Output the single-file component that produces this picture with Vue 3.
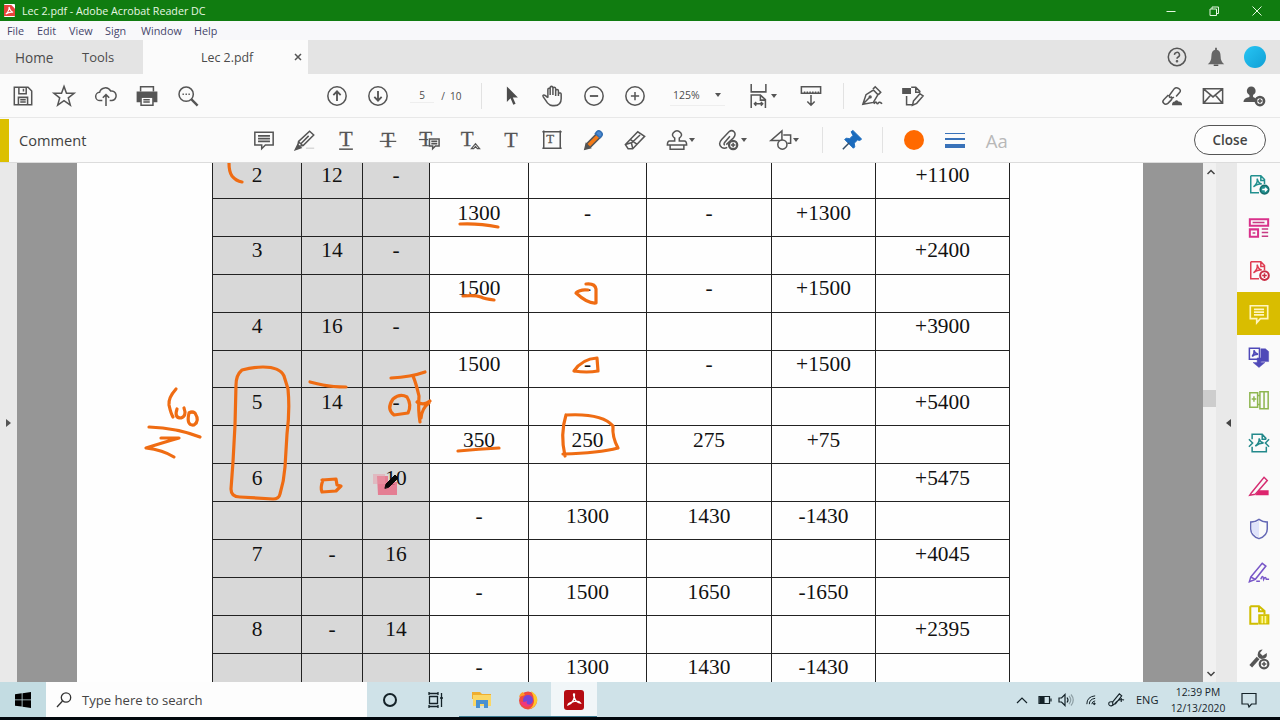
<template>
  <div class="screen">
    <header class="titlebar">
      <svg class="app-logo" viewBox="0 0 12 14">
        <rect width="12" height="14" rx="1" fill="#fff" />
        <path d="M0 1h8l4 4v8H0z" fill="#e9443c" />
        <path d="M2 11Q6 7 5.500 3Q7 8 10 9Q6 8 2 11z" fill="none" stroke="#fff" stroke-width="1.200" />
      </svg>
      <span class="title">Lec 2.pdf - Adobe Acrobat Reader DC</span>
      <div class="window-buttons">
        <svg viewBox="0 0 12 12"><path d="M1.500 6.500h9" /></svg>
        <svg viewBox="0 0 12 12"><path d="M2 4h6.500v6.500H2zM4 4V2h6.500v6.500h-2" /></svg>
        <svg viewBox="0 0 12 12"><path d="M1.500 1.500l9 9M10.500 1.500l-9 9" /></svg>
      </div>
    </header>

    <nav class="menubar">
      <span v-for="item in menu" :key="item" :class="'menu-' + item.toLowerCase()">{{ item }}</span>
    </nav>

    <div class="tabbar">
      <span class="tab home">Home</span>
      <span class="tab tools">Tools</span>
      <div class="tab active">
        <span class="tab-name">Lec 2.pdf</span>
        <svg class="tab-close" viewBox="0 0 8 8"><path d="M1 1l6 6M7 1L1 7" /></svg>
      </div>
      <div class="account">
        <svg class="icon" viewBox="0 0 24 24">
          <circle cx="12" cy="12" r="9.500" />
          <path d="M9.300 9.700a2.700 2.700 0 1 1 4 2.300q-1.300.8-1.300 2" />
          <circle cx="12" cy="16.600" r=".6" />
        </svg>
        <svg class="icon" viewBox="0 0 24 24" v-html="icons.bell"></svg>
        <span class="avatar"></span>
      </div>
    </div>

    <div class="toolbar">
      <div class="group files">
        <svg v-for="name in fileTools" :key="name" class="icon" viewBox="0 0 24 24" v-html="icons[name]"></svg>
      </div>
      <div class="group pages">
        <svg class="icon" viewBox="0 0 24 24" v-html="icons.up"></svg>
        <svg class="icon" viewBox="0 0 24 24" v-html="icons.down"></svg>
      </div>
      <span class="page-now">5</span>
      <span class="page-total">/&nbsp; 10</span>
      <i class="divider"></i>
      <div class="group view-tools">
        <svg v-for="name in viewTools" :key="name" class="icon" viewBox="0 0 24 24" v-html="icons[name]"></svg>
      </div>
      <div class="zoom-box"><span>125%</span><i class="caret"></i></div>
      <div class="fit">
        <svg class="icon" viewBox="0 0 24 24" v-html="icons.fit"></svg>
        <i class="caret"></i>
      </div>
      <svg class="icon scroll" viewBox="0 0 24 24" v-html="icons.scroll"></svg>
      <i class="divider second"></i>
      <div class="group signing">
        <svg class="icon" viewBox="0 0 24 24" v-html="icons.pen"></svg>
        <svg class="icon" viewBox="0 0 24 24" v-html="icons.edit"></svg>
      </div>
      <div class="group share">
        <svg class="icon" viewBox="0 0 24 24" v-html="icons.link"></svg>
        <svg class="icon" viewBox="0 0 24 24" v-html="icons.mail"></svg>
        <svg class="icon" viewBox="0 0 24 24" v-html="icons.person"></svg>
      </div>
    </div>

    <div class="commentbar">
      <i class="accent"></i>
      <span class="heading">Comment</span>
      <div class="group marks">
        <svg v-for="name in markTools" :key="name" class="icon" viewBox="0 0 24 24" v-html="icons[name]"></svg>
      </div>
      <div class="group dropdowns">
        <div v-for="name in dropTools" :key="name" class="drop">
          <svg class="icon" viewBox="0 0 24 24" v-html="icons[name]"></svg>
          <i class="caret"></i>
        </div>
      </div>
      <i class="divider"></i>
      <svg class="icon pin" viewBox="0 0 24 24" v-html="icons.pin"></svg>
      <i class="divider"></i>
      <span class="swatch"></span>
      <div class="weights"><i></i><i></i><i></i></div>
      <span class="font-button">Aa</span>
      <button class="close-button">Close</button>
    </div>

    <main class="viewer">
      <div class="rail left"><i class="arrow right-arrow"></i></div>
      <div class="canvas">
        <div class="page">
          <div class="table">
            <template v-for="(row, r) in rows" :key="r">
              <div v-for="(cell, c) in row" :key="c" class="cell" :class="{ shaded: c < 3 }">{{ cell }}</div>
            </template>
          </div>
        </div>
      </div>
      <div class="scrollbar">
        <svg viewBox="0 0 10 6"><path d="M1.500 5L5 1.500L8.500 5" /></svg>
        <i class="thumb"></i>
        <svg viewBox="0 0 10 6"><path d="M1.500 1L5 4.500L8.500 1" /></svg>
      </div>
      <div class="rail right"><i class="arrow left-arrow"></i></div>
      <aside class="sidebar">
        <div v-for="name in sideTools" :key="name" class="side-item" :class="{ selected: name === 'sideComment' }">
          <svg class="icon" viewBox="0 0 24 24" v-html="icons[name]"></svg>
        </div>
      </aside>

      <!-- pencil marks drawn over the page -->
      <svg class="ink" viewBox="0 163 1280 519">
        <path v-for="d in strokes" :key="d" :d="d" />
        <g class="cursor">
          <path d="M377 476h11v6h9v13h-19z" fill="#e8607c" stroke="none" opacity=".75" />
          <path d="M373 474h12v10h-12z" fill="#e89aa8" stroke="none" opacity=".5" />
          <path d="M385 488l1-4l9-9l3 3l-9 9z" fill="#080808" stroke="#080808" stroke-width="1" />
        </g>
      </svg>
    </main>

    <footer class="taskbar">
      <div class="start">
        <svg viewBox="0 0 16 16"><path d="M0 2.300l6.700-1v6.200H0zM7.500 1.200L16 0v7.500H7.500zM0 8.300h6.700v6.300L0 13.700zM7.500 8.300H16V16l-8.500-1.200z" /></svg>
      </div>
      <div class="search">
        <svg viewBox="0 0 16 16"><circle cx="10" cy="5.500" r="4.700" /><path d="M6.500 9L1 15" /></svg>
        <span>Type here to search</span>
      </div>
      <div class="apps">
        <div class="app"><svg viewBox="0 0 20 20"><circle cx="10" cy="10" r="6" fill="none" stroke="#142228" stroke-width="2" /></svg></div>
        <div class="app"><svg viewBox="0 0 20 20" fill="none" stroke="#142228" stroke-width="1.300"><path d="M3 3.500h9M3 16.500h9M3.500 6.500h8v7h-8zM15.500 3v14M14 8h3M3 2v3M12 2v3M3 15v3M12 15v3" /></svg></div>
        <div class="app open">
          <svg viewBox="0 0 20 20"><path d="M0 2h8l2 2h9v5H0z" fill="#efae2f" /><path d="M1 5h18v11H1z" fill="#fbd765" /><path d="M4 10h12v8h-4v-4H8v4H4z" fill="#4a91d0" /></svg>
        </div>
        <div class="app open">
          <svg viewBox="0 0 20 20"><circle cx="10" cy="10.500" r="9" fill="#f04a3e" /><path d="M13 1q8 5 6 11q-2 6-8 7q5-3 5-8q0-5-3-10z" fill="#ffc629" /><path d="M1 7q1-4 4-5l2 3z" fill="#ff9a25" /><circle cx="10" cy="10" r="5" fill="#7545d6" /><path d="M2 11q3 2 7 0q-2 4 5 4q-4 3-8 1q-3-1-4-5z" fill="#f1367a" /></svg>
        </div>
        <div class="app open current">
          <svg viewBox="0 0 20 20"><rect width="20" height="20" rx="3" fill="#b50c12" /><path d="M4 15q7-3 6.500-11q-2-1 0 4q2 5 6 5q-2-3-8-1q-4 1-4.500 3z" fill="none" stroke="#fff" stroke-width="1.300" /></svg>
        </div>
      </div>
      <div class="tray">
        <svg class="chevron" viewBox="0 0 12 8"><path d="M1 7l5-5l5 5" /></svg>
        <svg class="battery" viewBox="0 0 14 10"><path d="M1 1.500h10.500v7H1zM13 3.500v3" /><path d="M2 2h4v6H2z" fill="#142228" /></svg>
        <svg class="volume" viewBox="0 0 16 14"><path d="M1 5h2.500L7 1.500v11L3.500 9H1z" /><path d="M9 4.500q2 2.500 0 5" /><path d="M11 3q3.500 4 0 8M13 1.500q4.500 5.500 0 11" opacity=".35" /></svg>
        <svg class="wifi" viewBox="0 0 12 12"><path d="M1 11Q1 2 11 1M4 11Q4 5 11 4M7 11q0-3 4-4" /><circle cx="10" cy="10.500" r="1" fill="#142228" /></svg>
        <svg class="ink-pen" viewBox="0 0 18 16"><path d="M5 10L12 1.500l2.500 2L8 12l-3 1zM5 10Q0 9 1 13q2 3 6-1q5-6 10-4M14 6v4" /></svg>
        <span class="lang">ENG</span>
        <div class="clock"><span>12:39 PM</span><span>12/13/2020</span></div>
        <svg class="notice" viewBox="0 0 16 16"><path d="M1 1.500h14v10.500h-4.500L8 15l-1-3H1z" /></svg>
      </div>
    </footer>
    <div class="bottom-edge"></div>
  </div>
</template>

<script setup>
const menu = ['File', 'Edit', 'View', 'Sign', 'Window', 'Help'];

const fileTools = ['save', 'star', 'cloud', 'print', 'find'];
const viewTools = ['arrow', 'hand', 'minus', 'plus'];
const markTools = ['note', 'highlight', 'underline', 'strike', 'replace', 'insert', 'text', 'textBox', 'pencil', 'eraser'];
const dropTools = ['stamp', 'clip', 'shapes'];
const sideTools = [
  'exportPdf', 'organize', 'createPdf', 'sideComment', 'combine', 'compare',
  'compress', 'redact', 'shield', 'sign', 'sendFile', 'wrench',
];

const serifT = (x, y, size) =>
  `<text x="${x}" y="${y}" font-family="Liberation Serif, serif" font-size="${size}" text-anchor="middle" fill="#555" stroke="#555" stroke-width=".3">T</text>`;

const icons = {
  save: '<path d="M2.500 2.500h15l4 4v15h-19zM7.500 3v6.500h8V3M12.500 4v3M7 21v-7.500h10V21M9 16h6M9 18.500h6"/>',
  star: '<path d="M12 1.500l2.700 7.500H23l-6.300 5L18.900 22L12 17L5.100 22l2.200-8L1 9h8.300z"/>',
  cloud: '<path d="M8 17H5.500a4.500 4.500 0 0 1-.5-9A6.500 6.500 0 0 1 17 6.500a5.200 5.200 0 0 1 1.500 10.500h-2.500M12 23V10.500M8.500 14l3.500-3.500l3.500 3.500"/>',
  print: '<path d="M5 7V2h14v5"/><path d="M1.500 8h21v10h-3v-5H4.500v5h-3z" fill="#555"/><path d="M5.500 13h13v9h-13zM8 16h7M8 18.500h7"/>',
  find: '<circle cx="10" cy="10" r="7.800"/><path d="M15.500 15.500l7 7" stroke-width="2.600"/><path d="M6 10h1.500M9.300 10h1.500M12.500 10h1.500"/>',
  up: '<circle cx="12" cy="12" r="10"/><path d="M12 17.500V7M8 11l4-4l4 4" stroke-width="2"/>',
  down: '<circle cx="12" cy="12" r="10"/><path d="M12 6.500V17M8 13l4 4l4-4" stroke-width="2"/>',
  arrow: '<path d="M7.500 1.500v17l4-4l3 7l2.500-1l-3-7h5.500z" fill="#4c4c4c" stroke="none"/>',
  hand: '<path d="M7.500 14V5q0-1.500 1.300-1.500T10 5v6V3q0-1.500 1.400-1.500T13 3v8V4q0-1.500 1.400-1.500T16 4v8V6.500Q16 5 17.500 5T19 6.500V12M19 9q3-1 3 1v5q0 7.500-7.500 7.500h-2q-3 0-5.500-3L2.500 13q-1-2 .5-2.200T7.500 14"/>',
  minus: '<circle cx="12" cy="12" r="10"/><path d="M7.500 12h9" stroke-width="2"/>',
  plus: '<circle cx="12" cy="12" r="10"/><path d="M7.500 12h9M12 7.500v9"/>',
  fit: '<path d="M3.500-1v8.500h16V-1M3.500 25V11h10l5.500 5v9M13.500 11v5.500h5M7 20.500h9M9 18.500l-2 2l2 2M14 18.500l2 2l-2 2"/>',
  scroll: '<path d="M1.500 2h21v7h-21zM5 9V7M8 9V7M11 9V7M14 9V7M17 9V7M20 9V7M12 11v11M8 18l4 4l4-4"/>',
  pen: '<path d="M2 21L5.500 10.500l8-5l5 5l-5 8.500zM2 21l7-7M13 4.500L15.500 2l6 6L19 10.500M14 20.500q2-3 3-1t2 0t4 1"/><circle cx="10" cy="13" r="1"/>',
  edit: '<path d="M10 2.500h5l5 5M15 3v5h5M5 12v9.500h6M12.500 17.500l7-8l3.500 2.500l-7 8l-4.500 2z"/><path d="M1 4h8v5H1z" fill="#555"/>',
  link: '<path d="M8 11l-5 5q-2 2 0 4t4.500 0l3.500-3.500q2-2 0-4M10 14q-2-2 0-4l4.500-6q2-2 5 0t.5 4.500l-3.500 4M10 13q2 2 4 0"/><path d="M12 22q0-4 3-4q2-3 4 0q4 0 4 4z" fill="#555" stroke="none"/>',
  mail: '<path d="M1.500 4h21v16h-21zM2 4.500L12 13l10-8.500M2 19.500l7.500-8.500M22 19.500l-7.500-8.500"/>',
  person: '<circle cx="9" cy="6.500" r="4.800" fill="#555" stroke="none"/><path d="M.5 18.500q0-4.500 6.500-5.500v-3h4v3q4 1 4 5.500z" fill="#555" stroke="none"/><circle cx="18.500" cy="17.500" r="4.500" fill="#fafafa" stroke-width="2.800"/><path d="M16 17.500h5M18.500 15v5"/>',
  bell: '<path d="M3 20q4-3 4-9q0-6 4-7V2h2v2q4 1 4 7q0 6 4 9z" fill="#666" stroke="none"/><path d="M9.500 21h5"/>',
  note: '<path d="M2 3.500h20v14h-8.500L9.500 21.500v-4H2zM5.500 7.500h13M5.500 10.500h13M5.500 13.500h13"/>',
  highlight: '<path d="M4 19l1-5.500L17 2.500l4.500 4L10 18zM5 14l4.500 4M8 15.500l8-8"/><path d="M1.500 22.500l2.500-5l3.500 3z" fill="#555"/><path d="M13 21h9" opacity=".2"/>',
  underline: serifT(12, 18, 24) + '<path d="M4.500 22h15"/>',
  strike: serifT(12, 20, 23) + '<path d="M3 13.500h18" stroke-width="1.300"/>',
  replace: serifT(8.5, 18.5, 23) + '<path d="M1 11.500h10" stroke-width="1.300"/><path d="M12.500 11h10.500v7.500h-4l-3 3v-3h-3.500zM14.500 13.500h6.500M14.500 16h6.500" fill="#fafafa"/>',
  insert: serifT(9, 18.5, 23) + '<path d="M13.500 21.500l4.500-5.500l4.500 5.500H20l-2-2.500l-2 2.500z" stroke-width="1.300"/>',
  text: serifT(12, 19.5, 24),
  textBox: '<path d="M3 3h18v18H3zM1.500 3h3M19.500 3h3M3 1.500v3M21 1.500v3M1.500 21h3M19.500 21h3"/>' + serifT(10, 15.5, 14),
  pencil: '<path d="M4 16L15.500 4.500l4 4L8 20l-5 1z" fill="#f47a17"/><path d="M15 3q2-2 4.500 0t1 4.500l-2 2l-5-4.500z" fill="#4a88d0" stroke="#326eb2"/><path d="M2 22l1.500-6l4.500 4.500z" fill="#555"/>',
  eraser: '<path d="M1.500 17L15 3l7.500 5L9.500 21.500H4.500zM7 11.500l7 5M1.500 17l6.500-2l1.500 6M8.500 15l9-8.500"/>',
  stamp: '<path d="M9.500 13V10Q5.500 7 8 4q4-4 8 0q2.500 3-1.500 6v3h5.500q2.500 0 2.500 4.500h-21Q1.500 13 4 13zM4.500 17.500v4.500h15v-4.500"/>',
  clip: '<path d="M13 8l-6 7q-1 2 .5 2.500M4 20q-4.500-3.500 0-8.500l8-8.500q3-2.500 5.500 0t-.5 6.500L9 17M4 20q3 2 6 0"/><circle cx="16.500" cy="17.500" r="4.500" fill="#fafafa" stroke-width="2.400"/><path d="M16.500 15v5M14 17.500h5"/>',
  shapes: '<path d="M13 2v10.500H1zM14.500 6.500h8v9h-3.500"/><circle cx="13.500" cy="17" r="5" fill="#fafafa"/>',
  pin: '<path d="M13 1.500l9.500 9.500l-2 1.500l-2.500-.5l-3.500 3.500l.5 4l-1.500 1.500L4 11.500L5.500 10l4 .5l3.500-3.500l-2-4z" fill="#1b6bbd" stroke="#1b6bbd" stroke-width="1"/><path d="M9 15l-7 7" stroke="#344e68"/>',
  exportPdf: '<path d="M3 2h11l4 4v5M12 20.500H3V2M14 2v5h4M6 14q5-4 4-9q1 5 5 6q-5-1-9 3" stroke="#22908f"/><circle cx="18" cy="17" r="4.700" fill="#22908f" stroke="#176c6c"/><path d="M15.500 17h5M18.500 15l2 2l-2 2" stroke="#fff"/>',
  organize: '<path d="M2 2.500h20v7H2zM2 13.500h9v8H2z" stroke="#d9318b" stroke-width="2.200"/><path d="M5 6h13M5 17.500h3M15 13h7M15 17h7M15 21h7" stroke="#c63b84"/>',
  createPdf: '<path d="M3 2h11l4 4v5M12 20.500H3V2M14 2v5h4M6 14q5-4 4-9q1 5 5 6q-5-1-9 3" stroke="#df3d52"/><circle cx="18" cy="17" r="4.700" fill="#fff" stroke="#c92e45" stroke-width="2.200"/><path d="M15.500 17h5M18 14.500v5" stroke="#c92e45"/>',
  sideComment: '<path d="M2.500 3h19v14h-8l-4 4.500V17h-7zM6.500 7h11M6.500 10h11M6.500 13h11" stroke="#fff5c0" stroke-width="1.800"/>',
  combine: '<path d="M1.500 2.500h11v12h-11zM4.500 11.500q3-3 2-7q1 4 4.500 4.500q-4.500 0-6.500 2.500" stroke="#4f49b8"/><path d="M14 3h5l3.500 3v11H14zM10 13h4v5h4.500L12 23.500L5.500 18h4.500z" fill="#4f49b8" stroke="#4f49b8" stroke-width=".5"/>',
  compare: '<path d="M2 4h8.500v16H2zM13 3h9v18.500h-9zM17.500 3v18M10.500 7H13M10.500 17H13M4 11h5M6.500 8v6" stroke="#8eb650"/>',
  compress: '<path d="M4.500 8V2.500h11l4.500 5M4.500 16v5.500H20V16M15.500 3v5h4.500M8 15.500q5-4 4-8.500q1 4 5 5q-5 0-9 3.500M1 8l4 4l-4 4M23 8l-4 4l4 4" stroke="#23898b"/>',
  redact: '<path d="M4 19L17.500 2.500L21 6L8 21M4 19l-2 3l6-1" stroke="#d62d72"/><path d="M12 16.500h10.500v5.500H8z" fill="#dd256e" stroke="none"/>',
  shield: '<path d="M12 1.500q4 3 9 3v7.500q0 7.500-9 10.500q-9-3-9-10.500V4.500q5 0 9-3z" stroke="#6468b5"/><path d="M12 3v18q-8-3-8-9V6q5-.5 8-3z" fill="#dfe3fa" stroke="none"/>',
  sign: '<path d="M3 17.500L15.500 2.500l4 3L8 20l-6.500 2.500zM3 17.500l5 2.500M14 20q2-6 3 0q2-4 3 0h3M9 22h4" stroke="#7856c8"/>',
  sendFile: '<path d="M2.500 2.500h9.500l6 5v4M2.500 2.500v19H11M12 3v5h6" stroke="#d0bd00" stroke-width="2.200"/><path d="M12 12h10.500v9.500H12z" fill="#dfcf13" stroke="#d0bd00"/><path d="M15.500 13v8M19 13v8" stroke="#fff8a0"/>',
  wrench: '<path d="M3 20l8-9" stroke-width="4"/><path d="M16 1.500l-3 4l3 3l4.500-3q1 6.500-5.500 6.500q-6-1-4-7q1-3.500 5-3.500z" fill="#555" stroke="none"/><circle cx="17.500" cy="17.500" r="4.700" fill="#fafafa" stroke-width="2.400"/><path d="M15 17.500h5M17.500 15v5"/>',
};

const rows = [
  ['2', '12', '-', '', '', '', '', '+1100'],
  ['', '', '', '1300', '-', '-', '+1300', ''],
  ['3', '14', '-', '', '', '', '', '+2400'],
  ['', '', '', '1500', '-', '-', '+1500', ''],
  ['4', '16', '-', '', '', '', '', '+3900'],
  ['', '', '', '1500', '-', '-', '+1500', ''],
  ['5', '14', '-', '', '', '', '', '+5400'],
  ['', '', '', '350', '250', '275', '+75', ''],
  ['6', '', '10', '', '', '', '', '+5475'],
  ['', '', '', '-', '1300', '1430', '-1430', ''],
  ['7', '-', '16', '', '', '', '', '+4045'],
  ['', '', '', '-', '1500', '1650', '-1650', ''],
  ['8', '-', '14', '', '', '', '', '+2395'],
  ['', '', '', '-', '1300', '1430', '-1430', ''],
];

const strokes = [
  'M229 163Q229 172 232 176Q236 181 242 182',
  'M460 224Q478 223 498 227',
  'M463 296Q475 295 481 297Q485 299 494 300',
  'M586 284Q595 283 596 289L596 303Q588 304 576 293Q580 289 588 290',
  'M574 371Q582 359 597 358L598 371Q587 373 574 371',
  'M458 451Q479 449 499 448',
  'M566 415Q602 413 613 426Q612 437 618 448Q599 453 563 454M566 415Q560 434 565 456',
  'M236 385Q236 375 242 370Q253 367 263 367Q280 367 284 376L288 389Q290 410 287 434L285 467Q284 481 280 494Q279 499 273 499L240 497Q231 497 231 489L233 462L235 425Z',
  'M310 382Q318 384 323 385Q333 387 346 387',
  'M391 378Q411 377 425 372M413 376Q416 383 419 396Q418 410 420 422M417 402Q424 406 430 401M429 403Q422 408 421 418',
  'M393 399Q400 393 407 397Q412 405 408 413L394 415Q386 409 393 399Z',
  'M322 480L336 479L337 485L341 486L336 491L322 492Q320 488 323 480',
  'M176 389Q168 398 169 405Q171 414 173 417M177 409Q174 418 181 418Q187 416 184 408M189 413Q186 426 194 425Q200 421 195 413Q192 411 189 413',
  'M149 427Q177 428 200 437M161 438H179Q165 442 146 448Q163 450 174 457',
];
</script>

<style>
body {
  background: #000;
}
</style>

<style scoped>
* {
  box-sizing: border-box;
}

.screen {
  width: 1280px;
  height: 720px;
  display: flex;
  flex-direction: column;
  overflow: hidden;
  background: #fbfbfb;
  color: #4b4b4b;
  font-family: "Open Sans", "Noto Sans", sans-serif;
}

.icon {
  width: 22px;
  height: 22px;
  flex: none;
  overflow: visible;
  fill: none;
  stroke: #555;
  stroke-width: 1.65;
}

.group {
  display: flex;
  flex: none;
  align-items: center;
}

.caret {
  border: 3px solid transparent;
  border-top: 4px solid #555;
  border-bottom: 0;
}

.divider {
  width: 1px;
  height: 26px;
  background: #e2e2e2;
}

.titlebar {
  height: 21px;
  flex: none;
  display: flex;
  align-items: center;
  background: #107c10;
  color: #e6f7e2;
  font-size: 10.7px;
}

.app-logo {
  width: 11px;
  height: 13px;
  margin-left: 4px;
  margin-right: 7px;
}

.window-buttons {
  margin-left: auto;
  display: flex;
  gap: 31px;
  padding-right: 17px;
}

.window-buttons svg {
  width: 12px;
  height: 12px;
  fill: none;
  stroke: #e6f7e2;
}

.menubar {
  height: 19px;
  flex: none;
  display: flex;
  align-items: center;
  background: #f8f8fa;
  color: #45456a;
  font-size: 10.8px;
  padding-left: 7px;
}

.menubar span {
  width: 36px;
  white-space: nowrap;
}

.menubar .menu-file { width: 30px; }
.menubar .menu-edit { width: 32px; }
.menubar .menu-window { width: 53px; }

.tabbar {
  height: 34px;
  flex: none;
  display: flex;
  align-items: center;
  background: #e4e4e4;
  font-size: 13.6px;
}

.home {
  width: 67px;
  padding-left: 15px;
}

.tools {
  width: 76px;
  padding-left: 15px;
  font-size: 13px;
}

.active {
  height: 34px;
  width: 165px;
  display: flex;
  align-items: center;
  background: #fbfbfb;
  padding-left: 58px;
  font-size: 12.4px;
}

.tab-name {
  width: 93px;
}

.tab-close {
  width: 8px;
  height: 8px;
  stroke: #555;
  stroke-width: 1.5;
}

.account {
  margin-left: auto;
  display: flex;
  align-items: center;
  gap: 17px;
  padding-right: 14px;
}

.avatar {
  width: 22px;
  height: 22px;
  border-radius: 50%;
  background: linear-gradient(135deg, #27c5f4, #109fd5);
}

.toolbar {
  height: 44px;
  flex: none;
  display: flex;
  align-items: center;
  border-bottom: 1px solid #e8e8e8;
}

.files {
  gap: 19.3px;
  padding-left: 12px;
}

.pages {
  gap: 19px;
  margin-left: 127px;
}

.page-now {
  width: 24px;
  margin-left: 21px;
  text-align: center;
  font-size: 10px;
  border-bottom: 1px solid #eee;
}

.page-total {
  width: 47px;
  padding-left: 7px;
  font-size: 10px;
  white-space: nowrap;
}

.view-tools {
  gap: 19.3px;
  margin-left: 18px;
}

.zoom-box {
  width: 55px;
  margin-left: 24px;
  display: flex;
  align-items: center;
  justify-content: space-between;
  padding: 3px 4px 3px 3px;
  font-size: 10.5px;
  border-bottom: 1px solid #eee;
}

.fit {
  display: flex;
  align-items: center;
  margin-left: 23px;
  gap: 1px;
}

.scroll {
  margin-left: 23px;
}

.second {
  margin-left: 21px;
}

.signing {
  gap: 19px;
  margin-left: 17px;
}

.share {
  gap: 19px;
  margin-left: auto;
  padding-right: 15px;
}

.commentbar {
  height: 45px;
  flex: none;
  display: flex;
  align-items: center;
  border-bottom: 1px solid #dcdcdc;
}

.accent {
  align-self: stretch;
  width: 9px;
  margin-top: 1px;
  background: #dcc000;
}

.heading {
  width: 234px;
  padding-left: 10px;
  font-size: 14.6px;
  color: #404040;
}

.marks {
  gap: 19.2px;
  padding-left: 10px;
}

.dropdowns {
  gap: 23px;
  margin-left: 20px;
}

.drop {
  display: flex;
  align-items: center;
  gap: 1px;
}

.dropdowns + .divider {
  margin-left: 23px;
}

.pin {
  margin: 0 19px 0 18px;
}

.swatch {
  width: 20px;
  height: 20px;
  margin-left: 21px;
  border-radius: 50%;
  background: #ff6900;
}

.weights {
  width: 20px;
  margin-left: 21px;
  display: flex;
  flex-direction: column;
  gap: 4px;
}

.weights i {
  height: 1px;
  background: #3972b9;
}

.weights i:nth-child(2) { height: 2px; }
.weights i:nth-child(3) { height: 4px; }

.font-button {
  margin-left: 21px;
  font-size: 18.5px;
  font-weight: 500;
  color: #b8b8b8;
}

.close-button {
  width: 72px;
  height: 30px;
  margin-left: auto;
  margin-right: 14px;
  padding: 0 0 1px;
  border: 1.5px solid #555;
  border-radius: 15px;
  background: #fdfdfd;
  color: #444;
  font: 600 13.5px "Open Sans", sans-serif;
}

.viewer {
  position: relative;
  height: 519px;
  flex: none;
  display: flex;
  overflow: hidden;
}

.rail {
  display: flex;
  align-items: center;
  justify-content: center;
  background: #e9e9e9;
}

.rail.left { width: 17px; }
.rail.right { width: 21px; }

.arrow {
  border: 4px solid transparent;
}

.right-arrow {
  border-left: 5px solid #555;
  border-right: 0;
}

.left-arrow {
  margin-left: 3px;
  border-right: 5px solid #444;
  border-left: 0;
}

.canvas {
  width: 1186px;
  padding: 0 60px;
  background: #969696;
}

.page {
  height: 519px;
  padding-left: 135px;
  overflow: hidden;
  background: #fefefe;
}

.table {
  display: grid;
  grid-template-columns: 89px 61px 67px 99px 118px 125px 104px 134px;
  grid-auto-rows: 37.92px;
  width: 797px;
  margin-top: -2px;
  border-left: 1px solid #222;
  box-sizing: content-box;
}

.cell {
  display: flex;
  justify-content: center;
  padding-top: 1.6px;
  border-right: 1px solid #222;
  border-bottom: 1px solid #222;
  color: #111;
  font: 21.4px/25px "Liberation Serif", serif;
}

.shaded {
  background: #d8d8d8;
}

.scrollbar {
  width: 13px;
  display: flex;
  flex-direction: column;
  align-items: center;
  padding: 6px 0 5px;
  background: #f1f1f1;
}

.scrollbar svg {
  width: 10px;
  height: 6px;
  margin-left: 3px;
  fill: none;
  stroke: #444;
  stroke-width: 1.5;
}

.thumb {
  width: 13px;
  height: 17px;
  margin-top: 215px;
  margin-bottom: auto;
  background: #cdcdcd;
}

.sidebar {
  width: 43px;
  background: #fafafa;
}

.side-item {
  height: 43.1px;
  display: flex;
  align-items: center;
  justify-content: center;
}

.selected {
  background: #d9bd00;
}

.ink {
  position: absolute;
  left: 0;
  top: 0;
  width: 1280px;
  height: 519px;
  fill: none;
  stroke: #ef6c13;
  stroke-width: 3.2;
  stroke-linecap: round;
  stroke-linejoin: round;
}

.taskbar {
  height: 35px;
  flex: none;
  display: flex;
  background: #cfe2e8;
  color: #17252b;
}

.start {
  width: 46px;
  display: flex;
  align-items: center;
  justify-content: center;
  background: #c3dce2;
}

.start svg {
  width: 16px;
  height: 16px;
}

.search {
  width: 321px;
  display: flex;
  align-items: center;
  gap: 10px;
  padding-left: 10px;
  padding-top: 1px;
  background: #fdfdfd;
  color: #444;
  font-size: 13.1px;
}

.search svg {
  width: 16px;
  height: 16px;
  fill: none;
  stroke: #333;
  stroke-width: 1.3;
}

.apps {
  display: flex;
}

.app {
  width: 46px;
  display: flex;
  align-items: center;
  justify-content: center;
}

.app svg {
  width: 20px;
  height: 20px;
}

.open {
  padding-top: 1px;
  border-bottom: 1px solid #3d7a91;
}

.current {
  background: #f1f6f8;
}

.tray {
  margin-left: auto;
  display: flex;
  align-items: center;
  padding-right: 23px;
}

.tray svg {
  fill: none;
  stroke: #142228;
  stroke-width: 1.2;
}

.chevron { width: 12px; height: 8px; margin-right: 10px; }
.battery { width: 14px; height: 10px; margin-right: 6px; }
.volume { width: 16px; height: 14px; margin-right: 12px; }
.wifi { width: 10px; height: 12px; margin-right: 12px; }
.ink-pen { width: 17px; height: 16px; margin-right: 11px; }

.lang {
  width: 31px;
  font-size: 11px;
}

.clock {
  width: 62px;
  display: flex;
  flex-direction: column;
  align-items: center;
  font-size: 10.3px;
  line-height: 16px;
}

.notice {
  width: 16px;
  height: 16px;
  margin-left: 12px;
}

.bottom-edge {
  height: 3px;
  background: #02080d;
}
</style>
